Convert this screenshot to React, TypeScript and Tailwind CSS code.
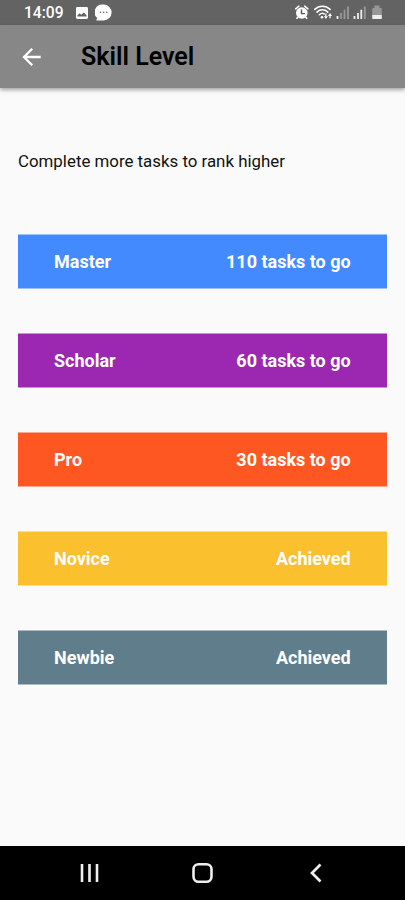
type Level = { name: string; status: string; color: string };

const levels: Level[] = [
  { name: "Master", status: "110 tasks to go", color: "bg-[#448aff]" },
  { name: "Scholar", status: "60 tasks to go", color: "bg-[#9c27b0]" },
  { name: "Pro", status: "30 tasks to go", color: "bg-[#ff5722]" },
  { name: "Novice", status: "Achieved", color: "bg-[#fbc02d]" },
  { name: "Newbie", status: "Achieved", color: "bg-[#607d8b]" },
];

function PhotoIcon() {
  return (
    <svg width="14" height="14" viewBox="0 0 14 14">
      <rect x="1" y="1" width="12" height="12" rx="1.4" fill="#fff" />
      <path d="M2.4 10.5V9.2l2.3-2 1.6 1.5L8.8 6.6l2.7 2.6v1.3z" fill="#636363" />
    </svg>
  );
}

function ChatIcon() {
  return (
    <svg width="17" height="17" viewBox="0 0 17 17">
      <path d="M8.7.6a7.8 7.8 0 1 1 0 15.800H1.800c-.5 0-.7-.5-.3-.9l.9-1.200A7.800 7.800 0 0 1 8.700.6z" fill="#fff" />
      <g fill="#666">
        <circle cx="5.600" cy="8.300" r="0.8" />
        <circle cx="8.700" cy="8.300" r="0.8" />
        <circle cx="11.800" cy="8.300" r="0.8" />
      </g>
    </svg>
  );
}

function StatusIcons() {
  return (
    <svg width="94" height="18" viewBox="293 4 94 18" fill="none">
      <g>
        <circle cx="301.800" cy="13" r="5.800" fill="#fff" />
        <path d="M295.700 8.800l3.200-2.600M307.900 8.800l-3.200-2.600" stroke="#fff" strokeWidth="1.600" strokeLinecap="round" />
        <path d="M298 17l-1.500 1.800M305.600 17l1.500 1.800" stroke="#fff" strokeWidth="1.700" />
        <path d="M301.500 9.600v4h3.400" stroke="#555" strokeWidth="1.400" />
      </g>
      <g stroke="#fff" strokeWidth="1.500" strokeLinecap="round">
        <path d="M314.700 9.400c4.200-4.200 11.200-4.200 15.400 0" />
        <path d="M317 12.100c3-3 7.800-3 10.800 0" />
        <path d="M319.300 14.700c1.600-1.600 3.600-1.700 5-.8" />
      </g>
      <circle cx="322" cy="17.300" r="1.300" fill="#fff" />
      <path d="M323.900 16.200h4l-2 2.900zM328 15.900h4l-2-2.900z" fill="#fff" />
      <path d="M325.900 13.400v3M330 15.600v2.600" stroke="#fff" strokeWidth="1.200" />
      <path d="M337.500 16v3" stroke="#fff" strokeWidth="1.800" />
      <path d="M341 13v6M344.500 9.800v9.200M348 6.500v12.500" stroke="#999" strokeWidth="1.800" />
      <path d="M354.500 16v3M358 13v6M361.300 9.800v9.200" stroke="#eee" strokeWidth="1.800" />
      <path d="M364.800 6.500v12.500" stroke="#999" strokeWidth="1.800" />
      <path d="M374.500 5.500h5V8h1.400q.9 0 .9.9V15h-9.600V8.900q0-.9.9-.9h1.400z" fill="#979797" />
      <path d="M372.200 15h9.600v3.200q0 .9-.9.900h-7.800q-.9 0-.9-.9z" fill="#eee" />
    </svg>
  );
}

function StatusBar() {
  return (
    <div className="flex h-[25px] items-center justify-between bg-[#636363] pl-6 pr-[18px]">
      <div className="flex items-center">
        <span className="w-[51px] pt-[2px] text-[15.6px] font-medium leading-[23px] text-white">14:09</span>
        <PhotoIcon />
        <span className="ml-1.5"><ChatIcon /></span>
      </div>
      <StatusIcons />
    </div>
  );
}

function AppBar() {
  return (
    <header className="relative flex h-[63px] items-center bg-[#878787] pl-[22px] shadow-[0_2px_4px_rgba(0,0,0,0.35)]">
      <svg width="20" height="20" viewBox="0 0 20 20" fill="none" stroke="#fff" strokeWidth="2.300">
        <path d="M18.700 10H2.500M10.200 1.800L2 10l8.200 8.200" />
      </svg>
      <h1 className="ml-[39px] text-[25px] font-semibold leading-none text-black">Skill Level</h1>
    </header>
  );
}

function LevelBar({ level }: { level: Level }) {
  return (
    <div
      className={`flex h-[55px] items-center justify-between border-y border-[#fafafa]/50 pl-9 pr-[36.3px] text-[18px] font-bold text-white ${level.color}`}
    >
      <span>{level.name}</span>
      <span>{level.status}</span>
    </div>
  );
}

function NavBar() {
  return (
    <nav className="h-[54px] bg-black">
      <svg width="405" height="54" viewBox="0 0 405 54" fill="none" stroke="#eee">
        <path d="M82 18v18M89.500 18v18M97 18v18" strokeWidth="2.600" />
        <rect x="193.500" y="18.200" width="18" height="17.600" rx="5" strokeWidth="2.600" />
        <path d="M320.500 18.500l-8.500 8.500 8.500 8.500" strokeWidth="2.700" />
      </svg>
    </nav>
  );
}

export default function App() {
  return (
    <div className="flex h-[900px] w-[405px] flex-col overflow-hidden bg-[#fafafa] font-[Roboto,sans-serif]">
      <StatusBar />
      <AppBar />
      <main className="flex-1 px-[18px] pt-[61px]">
        <p className="text-[16.875px] leading-6 text-[#111]">Complete more tasks to rank higher</p>
        <div className="mt-[61px] flex flex-col gap-11">
          {levels.map((level) => (
            <LevelBar key={level.name} level={level} />
          ))}
        </div>
      </main>
      <NavBar />
    </div>
  );
}
